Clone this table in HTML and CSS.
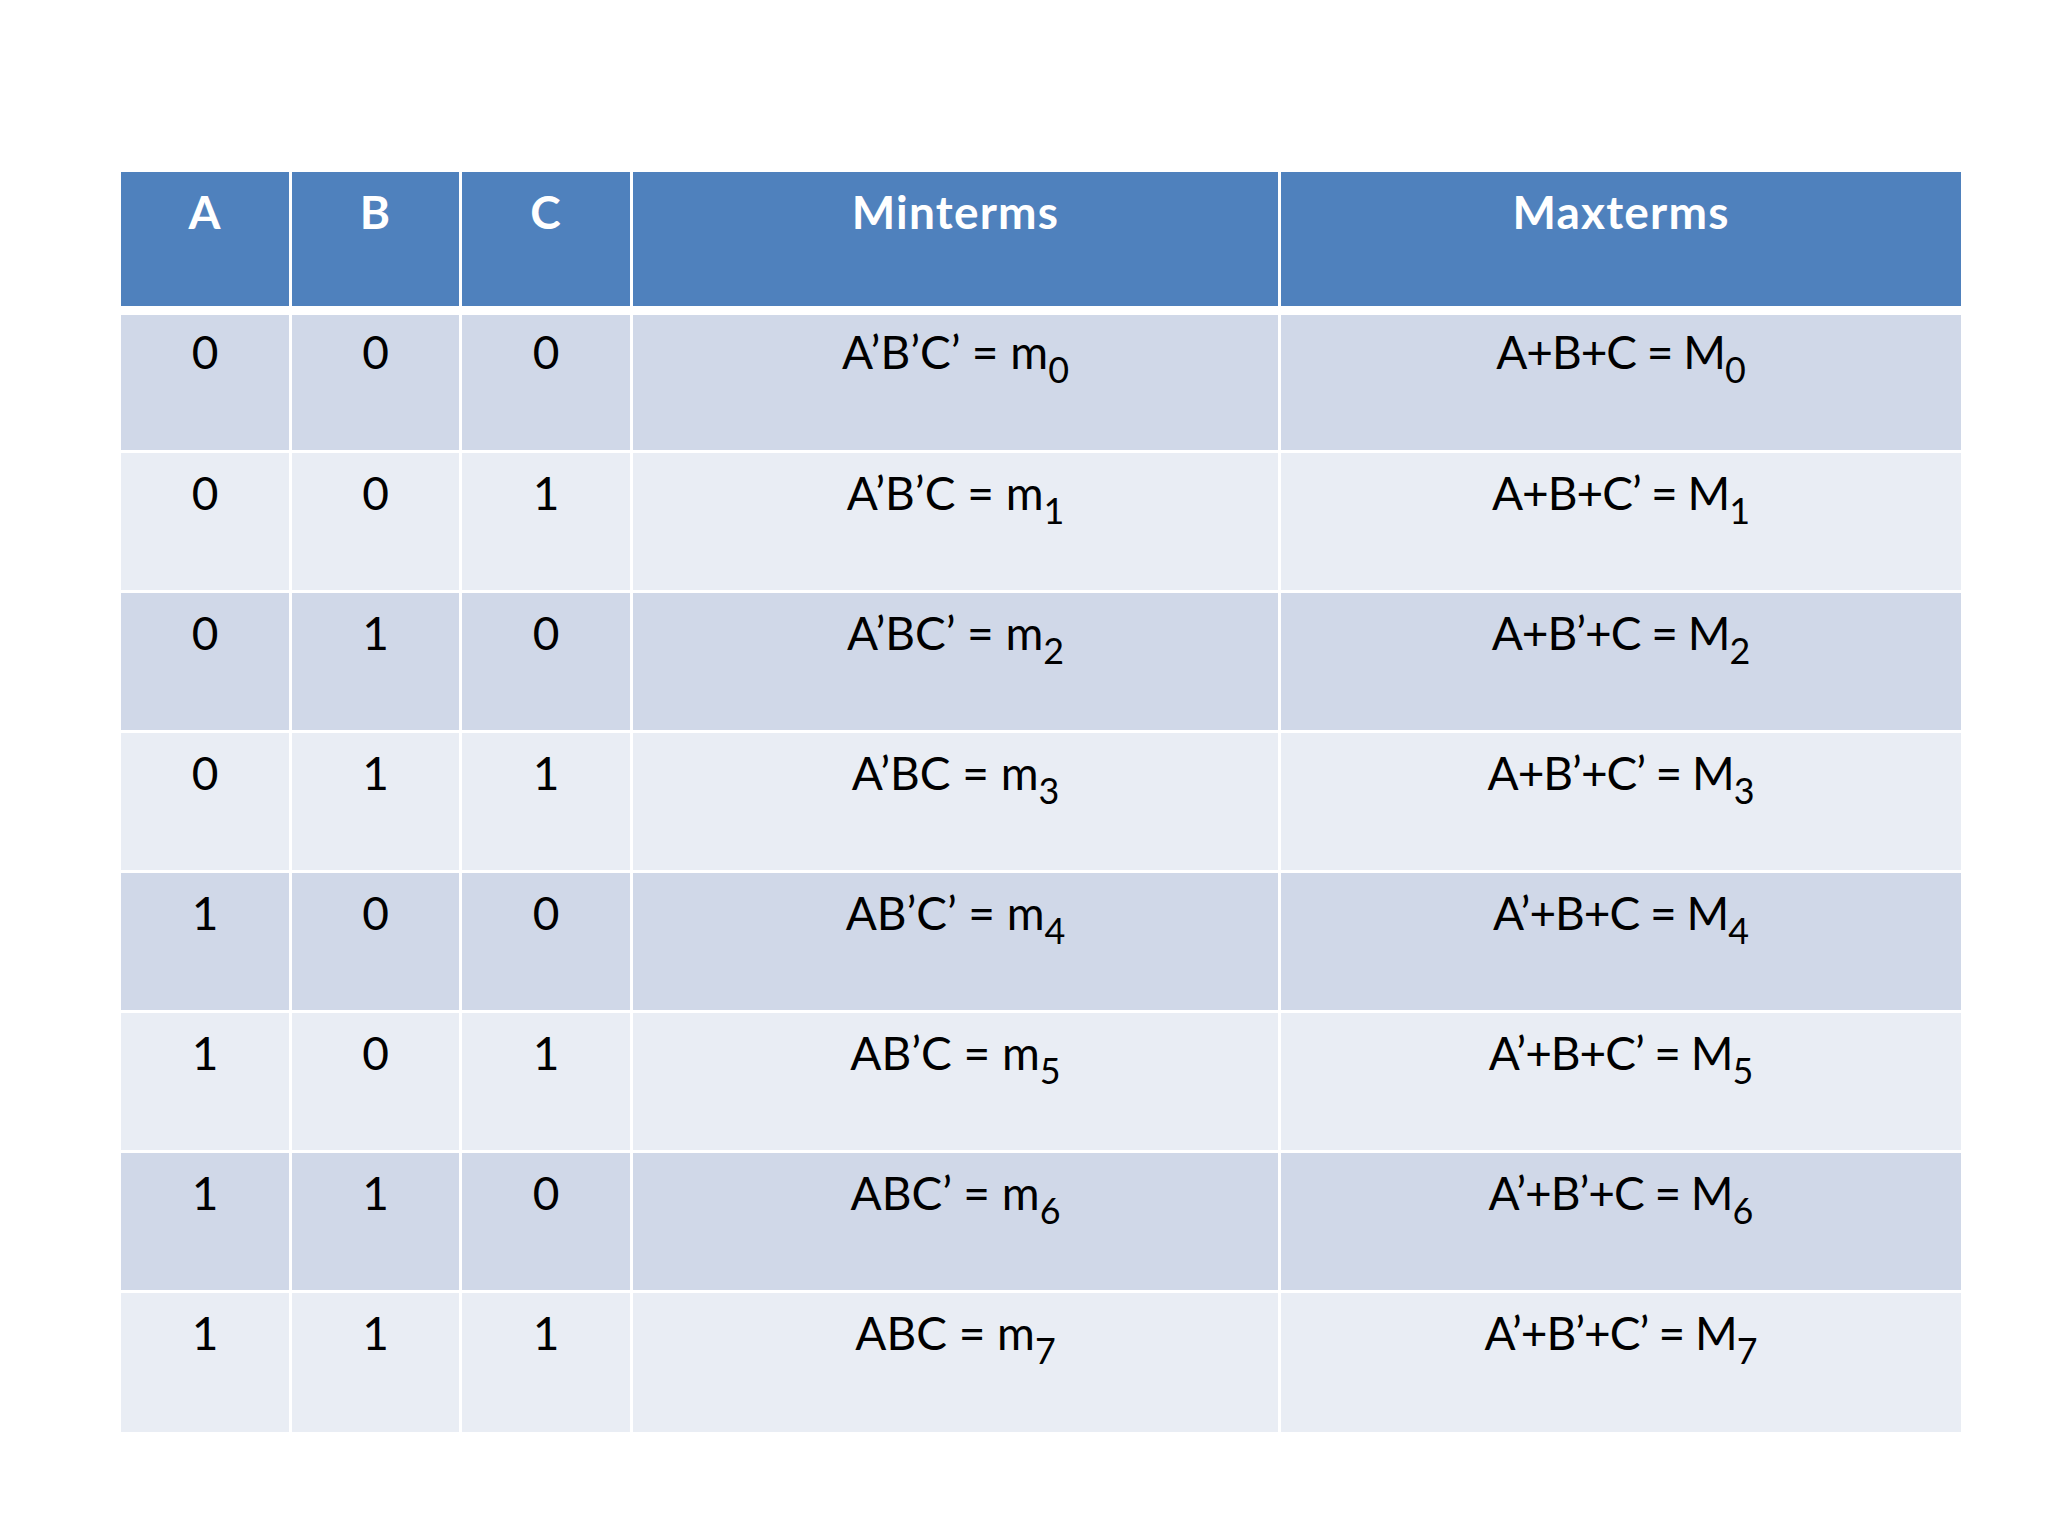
FILE: index.html
```html
<!DOCTYPE html>
<html>
<head>
<meta charset="utf-8">
<link rel="stylesheet" href="styles.css">
</head>
<body>
<div class="page">
  <div class="table">
    <div class="row head">
      <div class="cell">A</div><div class="cell">B</div><div class="cell">C</div><div class="cell">Minterms</div><div class="cell">Maxterms</div>
    </div>
    <div class="row dark first">
      <div class="cell">0</div><div class="cell">0</div><div class="cell">0</div>
      <div class="cell">A’B’C’ = m<sub>0</sub></div><div class="cell max">A+B+C = M<sub>0</sub></div>
    </div>
    <div class="row light">
      <div class="cell">0</div><div class="cell">0</div><div class="cell">1</div>
      <div class="cell">A’B’C = m<sub>1</sub></div><div class="cell max">A+B+C’ = M<sub>1</sub></div>
    </div>
    <div class="row dark">
      <div class="cell">0</div><div class="cell">1</div><div class="cell">0</div>
      <div class="cell">A’BC’ = m<sub>2</sub></div><div class="cell max">A+B’+C = M<sub>2</sub></div>
    </div>
    <div class="row light">
      <div class="cell">0</div><div class="cell">1</div><div class="cell">1</div>
      <div class="cell">A’BC = m<sub>3</sub></div><div class="cell max">A+B’+C’ = M<sub>3</sub></div>
    </div>
    <div class="row dark">
      <div class="cell">1</div><div class="cell">0</div><div class="cell">0</div>
      <div class="cell">AB’C’ = m<sub>4</sub></div><div class="cell max">A’+B+C = M<sub>4</sub></div>
    </div>
    <div class="row light">
      <div class="cell">1</div><div class="cell">0</div><div class="cell">1</div>
      <div class="cell">AB’C = m<sub>5</sub></div><div class="cell max">A’+B+C’ = M<sub>5</sub></div>
    </div>
    <div class="row dark">
      <div class="cell">1</div><div class="cell">1</div><div class="cell">0</div>
      <div class="cell">ABC’ = m<sub>6</sub></div><div class="cell max">A’+B’+C = M<sub>6</sub></div>
    </div>
    <div class="row light last">
      <div class="cell">1</div><div class="cell">1</div><div class="cell">1</div>
      <div class="cell">ABC = m<sub>7</sub></div><div class="cell max">A’+B’+C’ = M<sub>7</sub></div>
    </div>
  </div>
</div>
</body>
</html>
```

FILE: styles.css
```css
html, body {
  margin: 0;
  padding: 0;
  background: #ffffff;
}

.page {
  width: 2048px;
  height: 1536px;
  box-sizing: border-box;
  padding: 172px 0 0 121px;
  font-family: "Lato", "Open Sans", sans-serif;
  color: #000000;
}

.table {
  width: 1840px;
  display: flex;
  flex-direction: column;
  gap: 3px;
}

.row {
  display: grid;
  grid-template-columns: 168px 167px 168px 645px 680px;
  column-gap: 3px;
  height: 137px;
}

.row.head {
  height: 134px;
  margin-bottom: 6px;
}

.row.first {
  height: 135px;
}

.row.last {
  height: 139px;
}

.cell {
  box-sizing: border-box;
  padding-top: 12px;
  text-align: center;
  font-size: 46px;
  line-height: 56px;
  white-space: nowrap;
}

.cell.max {
  letter-spacing: -1px;
}

.row.first .cell {
  padding-top: 9px;
}

.head .cell {
  background: #4f81bd;
  color: #ffffff;
  font-weight: 700;
  letter-spacing: 1.2px;
}

.dark .cell {
  background: #d0d8e8;
}

.light .cell {
  background: #e9edf4;
}

sub {
  font-size: 0.78em;
  vertical-align: -14px;
  line-height: 0;
  letter-spacing: 0;
}
```
